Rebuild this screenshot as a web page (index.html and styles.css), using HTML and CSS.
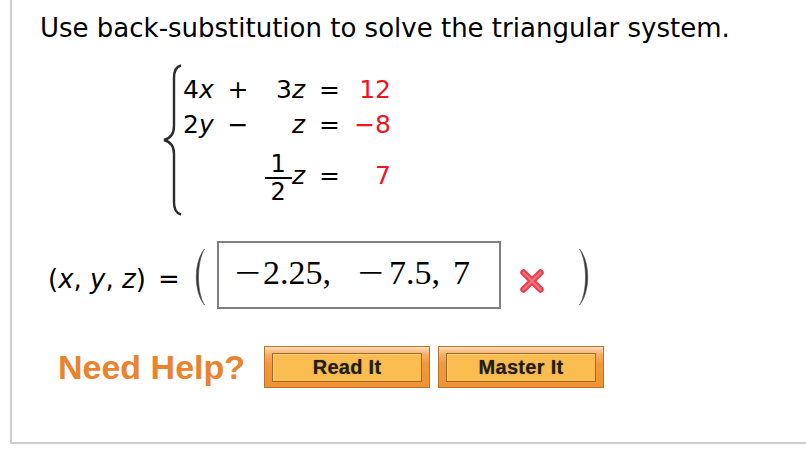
FILE: index.html
```html
<!DOCTYPE html>
<html lang="en">
<head>
<meta charset="utf-8">
<title>Back-substitution</title>
<link rel="stylesheet" href="styles.css">
</head>
<body>
<div class="panel">
  <p class="prompt">Use back-substitution to solve the triangular system.</p>

  <div class="system">
    <svg class="brace" viewBox="0 0 20 152" aria-hidden="true">
      <path d="M19 1.5 C14.5 2.5 12 6 12 14 V62 C12 70 8 74.5 2 76 C8 77.5 12 82 12 90 V138 C12 146 14.5 149.5 19 150.5" fill="none" stroke="#2b2b2b" stroke-width="2.4"/>
    </svg>
    <div class="eqs">
      <span class="c1">4<i>x</i></span><span class="c2">+</span><span class="c3">3<i>z</i></span><span class="c4">=</span><span class="c5 red">12</span>
      <span class="c1">2<i>y</i></span><span class="c2">−</span><span class="c3"><i>z</i></span><span class="c4">=</span><span class="c5 red">−8</span>
      <span class="c1"></span><span class="c2"></span><span class="c3 frac-cell"><span class="frac"><span class="num">1</span><span class="bar"></span><span class="den">2</span></span><i>z</i></span><span class="c4">=</span><span class="c5 red">7</span>
    </div>
  </div>

  <div class="answer">
    <span class="lhs">(<i>x</i>, <i>y</i>, <i>z</i>) <span class="eq">=</span></span>
    <svg class="paren" viewBox="0 0 15 58" aria-hidden="true">
      <path d="M13.5 1 C2.5 14 2.5 44 13.5 57 C5.5 44 5.5 14 13.5 1 Z" fill="#333" stroke="#555" stroke-width="0.6"/>
    </svg>
    <div class="box"><span class="m">−</span><span class="n">2.25,</span><span class="m m2">−</span><span class="n n2">7.5,</span><span class="n n3">7</span></div>
    <svg class="wrong" viewBox="0 0 28 28" aria-hidden="true">
      <path d="M5.5 5.5 L22.5 22.5 M22.5 5.5 L5.5 22.5" stroke="#e9434f" stroke-width="6.5" stroke-linecap="round"/>
      <path d="M5.5 5.5 L22.5 22.5 M22.5 5.5 L5.5 22.5" stroke="#f4737c" stroke-width="2" stroke-linecap="round"/>
    </svg>
    <svg class="paren paren-r" viewBox="0 0 15 58" aria-hidden="true">
      <path d="M1.5 1 C12.5 14 12.5 44 1.5 57 C9.5 44 9.5 14 1.5 1 Z" fill="#333" stroke="#555" stroke-width="0.6"/>
    </svg>
  </div>

  <div class="help">
    <span class="need">Need Help?</span>
    <button class="btn" type="button"><span>Read It</span></button>
    <button class="btn btn2" type="button"><span>Master It</span></button>
  </div>
</div>
</body>
</html>
```
FILE: styles.css
```css
html, body {
  margin: 0;
  background: #fff;
}
body {
  font-family: "DejaVu Sans", Verdana, sans-serif;
  color: #000;
}
.panel {
  margin-left: 10px;
  height: 442px;
  border-left: 2px solid #cccccc;
  border-bottom: 2px solid #cccccc;
}
.prompt {
  margin: 0;
  padding: 13px 0 0 28px;
  font-size: 26px;
  line-height: 30px;
}

/* equation system */
.system {
  display: flex;
  margin: 21px 0 0 150px;
}
.brace {
  width: 20px;
  height: 152px;
  margin-right: 1px;
  flex: none;
}
.eqs {
  display: grid;
  grid-template-columns: 39px 32px 51px 49px 37px;
  grid-template-rows: 35px 35px auto;
  align-items: baseline;
  margin-top: 8px;
  font-size: 25px;
  line-height: 35px;
}
.eqs i {
  font-style: italic;
}
.c1 { text-align: left; }
.c2 { text-align: center; }
.c3 { text-align: right; }
.c4 { text-align: center; }
.c5 { text-align: right; }
.red { color: #f0141e; }
.frac-cell {
  padding-top: 10px;
}
.frac {
  display: inline-flex;
  flex-direction: column;
  align-items: center;
  vertical-align: 12px;
  font-size: 24px;
  line-height: 24px;
}
.frac .bar {
  align-self: stretch;
  height: 1.5px;
  margin-top: 1px;
  background: #000;
}
.frac .num,
.frac .den {
  padding: 0 6px;
}
.frac .den {
  margin-top: 1px;
}

/* answer row */
.answer {
  display: flex;
  align-items: flex-start;
  margin-top: 25px;
  padding-left: 36px;
}
.lhs {
  margin-top: 23px;
  font-size: 26px;
  line-height: 30px;
  white-space: nowrap;
}
.lhs .eq {
  margin-left: 4px;
}
.paren {
  width: 15px;
  height: 58px;
  margin: 7px 0 0 11px;
  flex: none;
}
.box {
  box-sizing: border-box;
  width: 284px;
  height: 68px;
  margin-left: 11px;
  padding: 11px 0 0 16px;
  border: 2px solid #808080;
  font-family: "Liberation Serif", "Times New Roman", serif;
  font-size: 34px;
  line-height: 38px;
  white-space: nowrap;
}
.box .m {
  display: inline-block;
  width: 25px;
  text-align: center;
  transform: scaleX(1.35);
}
.box .n {
  margin-left: 3px;
}
.box .m2 {
  margin-left: 27px;
}
.box .n2 {
  margin-left: 6px;
}
.box .n3 {
  margin-left: 13px;
}
.wrong {
  width: 28px;
  height: 28px;
  margin: 26px 0 0 17px;
  flex: none;
}
.paren-r {
  margin-left: 32px;
}

/* help row */
.help {
  display: flex;
  align-items: center;
  margin-top: 37px;
  padding-left: 46px;
}
.need {
  font-family: "Liberation Sans", Arial, sans-serif;
  font-weight: bold;
  font-size: 34px;
  color: #e9832c;
  margin-right: 19px;
}
.btn {
  box-sizing: border-box;
  width: 166px;
  height: 42px;
  margin: 0;
  padding: 6px 7px 5px 7px;
  border: 1px solid #b7742f;
  background: linear-gradient(#fbdcb8 0, #f6b06a 18%, #f29a3c 40%, #f0922f 100%);
  font-family: "Liberation Sans", Arial, sans-serif;
  font-weight: bold;
  font-size: 20px;
  cursor: pointer;
}
.btn span {
  box-sizing: border-box;
  display: flex;
  align-items: center;
  justify-content: center;
  height: 100%;
  border: 1.5px solid #9c6a2e;
  background: #fbbc50;
  box-shadow: inset 1px 1px 0 #fcd27e;
  color: #1e1e1e;
  letter-spacing: 0.3px;
  text-shadow: 0 0 1px rgba(40, 25, 0, 0.5);
}
.btn2 {
  margin-left: 8px;
}
```
